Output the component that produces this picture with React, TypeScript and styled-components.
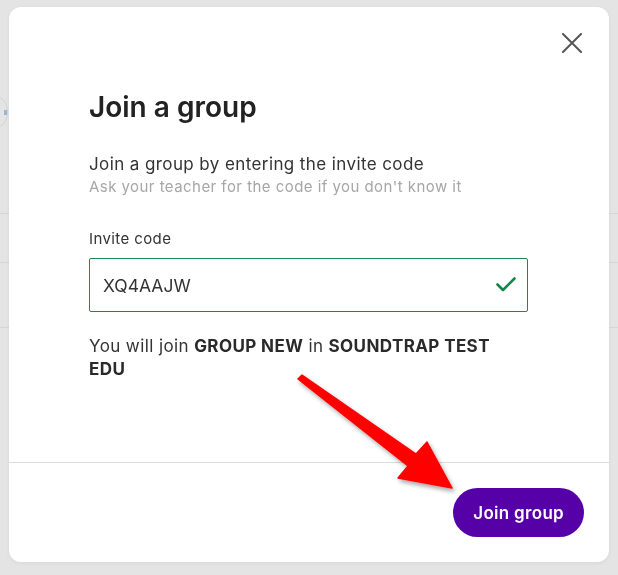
import styled, { createGlobalStyle } from 'styled-components';

const GlobalStyle = createGlobalStyle`
  html, body {
    margin: 0;
    padding: 0;
    background: #e4e4e4;
    font-family: Inter, "Noto Sans", "Liberation Sans", sans-serif;
    -webkit-font-smoothing: antialiased;
  }
`;

const backdropRows = [213, 262, 327];

export default function App() {
  return (
    <>
      <GlobalStyle />
      <Backdrop>
        <Avatar />
        {backdropRows.map((top, i) => (
          <BackdropRow key={i} $top={top} />
        ))}
      </Backdrop>

      <Dialog role="dialog" aria-labelledby="join-title">
        <CloseButton aria-label="Close">
          <svg width="20" height="20" viewBox="0 0 20 20">
            <path d="M1 1 L19 19 M19 1 L1 19" stroke="#555" strokeWidth="2" strokeLinecap="round" />
          </svg>
        </CloseButton>

        <Body>
          <Title id="join-title">Join a group</Title>
          <Lead>Join a group by entering the invite code</Lead>
          <Hint>Ask your teacher for the code if you don't know it</Hint>

          <Label htmlFor="invite">Invite code</Label>
          <InputWrap>
            <CodeInput id="invite" defaultValue="XQ4AAJW" />
            <Check width="20" height="15" viewBox="0 0 20 15">
              <path d="M1.5 7.5 L7 13 L18.5 1.5" fill="none" stroke="#17844a" strokeWidth="2.6" strokeLinecap="round" strokeLinejoin="round" />
            </Check>
          </InputWrap>

          <Result>
            You will join <strong>GROUP NEW</strong> in <strong>SOUNDTRAP TEST EDU</strong>
          </Result>
        </Body>

        <Footer>
          <PrimaryButton>Join group</PrimaryButton>
        </Footer>
      </Dialog>

      {/* red callout arrow pointing at the submit button */}
      <Callout width="618" height="575" viewBox="0 0 618 575">
        <defs>
          <filter id="arrow-shadow" x="-20%" y="-20%" width="140%" height="140%">
            <feDropShadow dx="2" dy="3" stdDeviation="2" floodColor="#000" floodOpacity="0.35" />
          </filter>
        </defs>
        <polygon
          points="302,375 416,454 427,442 452,488 398,478 408,466 298,379"
          fill="#ff0000"
          stroke="#ff0000"
          strokeWidth="1.5"
          strokeLinejoin="round"
          filter="url(#arrow-shadow)"
        />
      </Callout>
    </>
  );
}

const Backdrop = styled.div`
  position: relative;
  width: 618px;
  height: 575px;
  overflow: hidden;
`;

const Avatar = styled.div`
  position: absolute;
  left: -30px;
  top: 93px;
  width: 36px;
  height: 36px;
  border-radius: 50%;
  border: 1px solid #d4d4d4;
  &::after {
    content: '';
    position: absolute;
    right: 0;
    top: 16px;
    width: 3px;
    height: 5px;
    background: #9db4d8;
  }
`;

const BackdropRow = styled.div<{ $top: number }>`
  position: absolute;
  left: 0;
  right: 0;
  top: ${p => p.$top}px;
  border-top: 1px solid #d6d6d6;
`;

const Dialog = styled.div`
  position: fixed;
  top: 7px;
  left: 9px;
  width: 600px;
  height: 555px;
  background: #fff;
  border-radius: 12px;
  box-shadow: 0 1px 4px rgba(0, 0, 0, 0.06);
  display: flex;
  flex-direction: column;
  box-sizing: border-box;
`;

const CloseButton = styled.button`
  position: absolute;
  top: 16px;
  right: 17px;
  width: 40px;
  height: 40px;
  padding: 0;
  border: none;
  background: none;
  display: flex;
  align-items: center;
  justify-content: center;
  cursor: pointer;
`;

const Body = styled.div`
  flex: 1;
  padding: 83px 81px 0 80px;
  display: flex;
  flex-direction: column;
`;

const Title = styled.h1`
  margin: 0;
  font-size: 28px;
  line-height: 34px;
  font-weight: 600;
  color: #222;
  letter-spacing: 0;
`;

const Lead = styled.p`
  margin: 29px 0 0;
  font-size: 17px;
  line-height: 23px;
  letter-spacing: 0.4px;
  color: #333;
`;

const Hint = styled.p`
  margin: 0;
  font-size: 15px;
  line-height: 22px;
  letter-spacing: 0.45px;
  color: #a6a6a6;
`;

const Label = styled.label`
  margin-top: 31px;
  font-size: 15px;
  line-height: 20px;
  letter-spacing: 0.4px;
  color: #333;
`;

const InputWrap = styled.div`
  position: relative;
  margin-top: 9px;
`;

const CodeInput = styled.input`
  box-sizing: border-box;
  width: 100%;
  height: 54px;
  padding: 0 48px 0 13px;
  border: 1px solid #1d8a50;
  border-radius: 2px;
  font-family: inherit;
  font-size: 17.5px;
  color: #333;
  outline: none;
`;

const Check = styled.svg`
  position: absolute;
  right: 12px;
  top: 19px;
`;

const Result = styled.p`
  margin: 23px 0 0;
  font-size: 17px;
  line-height: 23px;
  letter-spacing: 0.4px;
  color: #333;
  strong {
    font-weight: 700;
    color: #2a2a2a;
  }
`;

const Footer = styled.div`
  border-top: 1px solid #dcdcdc;
  padding: 25px 25px 25px;
  display: flex;
  justify-content: flex-end;
`;

const PrimaryButton = styled.button`
  height: 49px;
  padding: 0 20px;
  min-width: 130px;
  border: none;
  border-radius: 25px;
  background: #5600a8;
  color: #fff;
  font-family: inherit;
  font-size: 17px;
  font-weight: 600;
  letter-spacing: 0.3px;
  cursor: pointer;
`;

const Callout = styled.svg`
  position: fixed;
  left: 0;
  top: 0;
  pointer-events: none;
`;
